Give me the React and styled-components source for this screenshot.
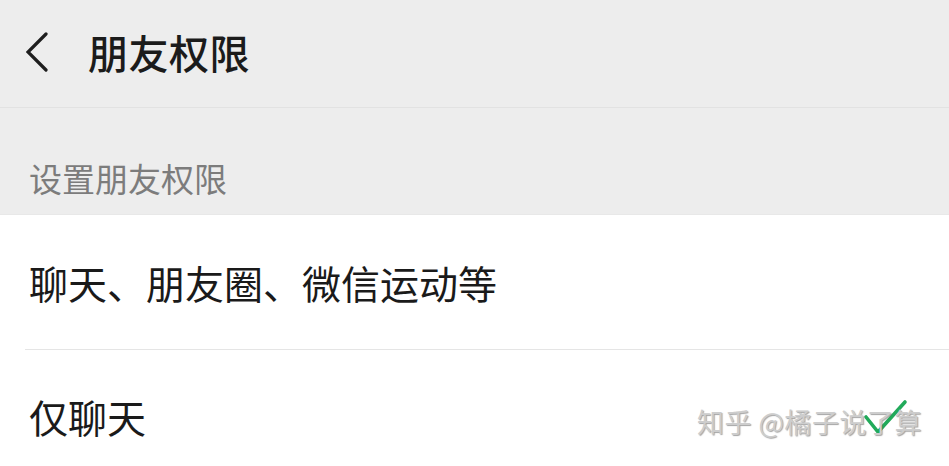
import React from "react";
import styled, { createGlobalStyle } from "styled-components";

const Global = createGlobalStyle`
  html, body { margin: 0; padding: 0; background: #ffffff; }
  body {
    font-family: "Noto Sans CJK SC", "Noto Sans", sans-serif;
    -webkit-font-smoothing: antialiased;
  }
`;

const Page = styled.div`
  width: 949px;
  height: 466px;
  overflow: hidden;
  position: relative;
  background: #ffffff;
  display: flex;
  flex-direction: column;
`;

const Header = styled.header`
  height: 107px;
  background: #ededed;
  border-bottom: 1px solid #e2e2e2;
  display: flex;
  align-items: center;
  padding-left: 26px;
  gap: 32px;
  flex-shrink: 0;
`;

const BackButton = styled.button`
  width: 30px;
  height: 44px;
  padding: 0;
  border: none;
  background: transparent;
  display: flex;
  align-items: center;
  justify-content: flex-start;
  margin-top: -4px;
`;

const Title = styled.h1`
  margin: 0;
  font-size: 40px;
  font-weight: 500;
  color: #1b1b1b;
  line-height: 1;
  margin-top: -3px;
  letter-spacing: 0.5px;
`;

const SectionLabel = styled.div`
  height: 107px;
  background: #ededed;
  box-sizing: border-box;
  display: flex;
  align-items: flex-end;
  padding: 0 0 19px 29px;
  font-size: 33px;
  color: #7c7c7c;
  line-height: 1;
  flex-shrink: 0;
  border-bottom: 1px solid #e8e8e8;
`;

const List = styled.ul`
  list-style: none;
  margin: 0;
  padding: 0;
  background: #ffffff;
`;

const Row = styled.li`
  height: 134px;
  box-sizing: border-box;
  display: flex;
  align-items: center;
  justify-content: space-between;
  padding: 0 40px 0 29px;
  position: relative;
  font-size: 39px;
  color: #1a1a1a;
  line-height: 1;

  & + & {
    border-top: 1px solid #e5e5e5;
    margin-left: 25px;
    padding-left: 4px;
  }
`;

const RowText = styled.span`
  margin-top: ${(p) => p.$shift || 0}px;
`;

const Check = styled.svg`
  width: 46px;
  height: 36px;
`;

const Watermark = styled.div`
  position: absolute;
  left: 697px;
  top: 408px;
  font-size: 27px;
  color: #cdcdcd;
  letter-spacing: 0.5px;
  text-shadow: 1px 1px 1px rgba(90, 90, 90, 0.55);
  line-height: 1;
  white-space: nowrap;
  pointer-events: none;
`;

export default function App() {
  return (
    <>
      <Global />
      <Page>
        <Header>
          <BackButton aria-label="返回">
            <svg width="24" height="44" viewBox="0 0 24 44">
              <polyline
                points="20,4 2,22 20,40"
                fill="none"
                stroke="#1e1e1e"
                strokeWidth="3.2"
                strokeLinecap="round"
                strokeLinejoin="miter"
              />
            </svg>
          </BackButton>
          <Title>朋友权限</Title>
        </Header>
        <SectionLabel>设置朋友权限</SectionLabel>
        <List>
          <Row>
            <RowText>聊天、朋友圈、微信运动等</RowText>
          </Row>
          <Row>
            <RowText>仅聊天</RowText>
            <Check viewBox="0 0 46 36">
              <polyline
                points="3,18 15,33 42,3"
                fill="none"
                stroke="#22aa5a"
                strokeWidth="3.6"
                strokeLinecap="round"
                strokeLinejoin="round"
              />
            </Check>
          </Row>
        </List>
        <Watermark>知乎 @橘子说了算</Watermark>
      </Page>
    </>
  );
}
